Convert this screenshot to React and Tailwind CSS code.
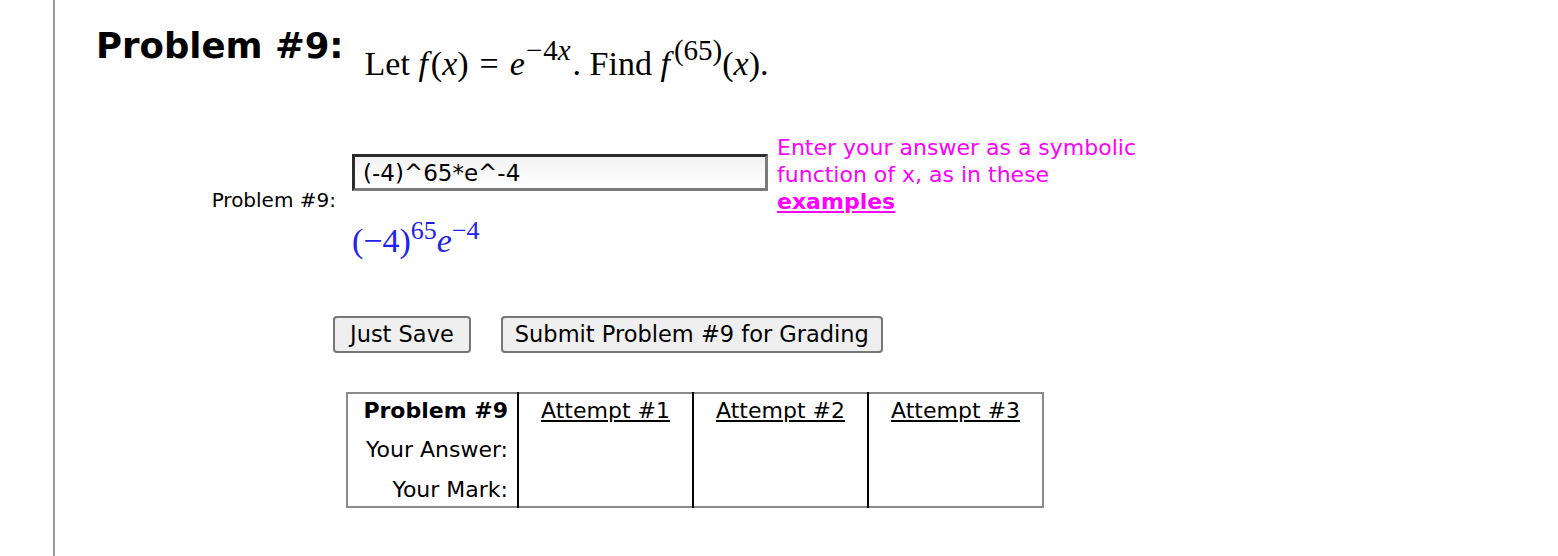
import React from 'react';

const sans = "font-['DejaVu_Sans','Verdana',sans-serif]";
const serif = "font-['Liberation_Serif','Times_New_Roman',serif]";

function Sup({ children, size = 'text-[29px]', raise = '-top-[15px]', extra = '' }) {
  return <span className={`relative ${raise} ${size} ${extra} leading-none`}>{children}</span>;
}

function Question() {
  return (
    <span className={`${serif} text-[34px] leading-[40px] text-black whitespace-nowrap`}>
      Let <i className="mr-[3px]">f</i>(<i>x</i>)<span className="mx-[11px]">=</span><i className="mr-[1px]">e</i>
      <Sup>
        <span className="mr-[1px]">−</span>4<i>x</i>
      </Sup>
      <span className="ml-[2px]">. Find </span>
      <i className="mr-[4px]">f</i>
      <Sup>(65)</Sup>(<i>x</i>).
    </span>
  );
}

function Preview() {
  return (
    <div className={`${serif} text-[34px] leading-[40px] text-[#2222ee] whitespace-nowrap`}>
      (−4)<Sup size="text-[26px]" raise="-top-[13px]">65</Sup>
      <i>e</i>
      <Sup size="text-[26px]" raise="-top-[13px]">−4</Sup>
    </div>
  );
}

function AttemptsTable() {
  const cols = ['Attempt #1', 'Attempt #2', 'Attempt #3'];
  return (
    <table className="w-[696px] table-fixed border-2 border-[#8a8a8a] border-collapse text-[22px] text-black">
      <colgroup>
        <col className="w-[171px]" />
        <col className="w-[175px]" />
        <col className="w-[175px]" />
        <col className="w-[175px]" />
      </colgroup>
      <tbody>
        <tr className="h-[37px]">
          <th className="text-right pr-[9px] pb-[3px] font-bold border-r-2 border-black">Problem #9</th>
          {cols.map((c, i) => (
            <td key={c} className={`text-center underline pb-[3px] ${i < 2 ? 'border-r-2 border-black' : ''}`}>
              {c}
            </td>
          ))}
        </tr>
        <tr className="h-[39px]">
          <td className="text-right pr-[9px] border-r-2 border-black">Your Answer:</td>
          <td className="border-r-2 border-black"></td>
          <td className="border-r-2 border-black"></td>
          <td></td>
        </tr>
        <tr className="h-[36px]">
          <td className="text-right pr-[9px] pt-[4px] border-r-2 border-black">Your Mark:</td>
          <td className="border-r-2 border-black"></td>
          <td className="border-r-2 border-black"></td>
          <td></td>
        </tr>
      </tbody>
    </table>
  );
}

export default function App() {
  return (
    <div className={`${sans} flex min-h-[556px] bg-white text-black`}>
      <div className="w-[55px] shrink-0 border-r-2 border-[#9a9a9a]" />
      <div className="flex-1 pl-[41px]">
        {/* heading */}
        <div className="flex items-start pt-[26px] h-[84px]">
          <h2 className="text-[35.5px] leading-[40px] font-bold whitespace-nowrap">Problem #9:</h2>
          <div className="ml-[21px] mt-[18px]">
            <Question />
          </div>
        </div>

        {/* answer row */}
        <div className="flex items-start mt-[50px] h-[136px]">
          <div className="w-[240px] text-right text-[20px] leading-[27px] mt-[53px]">Problem #9:</div>
          <div className="ml-[16px] flex items-start">
            <div className="flex flex-col mt-[20px]">
              <input
                type="text"
                defaultValue="(-4)^65*e^-4"
                className="w-[416px] h-[37px] px-[8px] text-[23px] text-black border-[3px] border-t-[#2b2b2b] border-l-[#2b2b2b] border-b-[#7a7a7a] border-r-[#7a7a7a] bg-gradient-to-b from-[#f2f2f2] to-white outline-none"
              />
              <div className="mt-[30px]">
                <Preview />
              </div>
            </div>
            <div className="ml-[9px] text-[22px] leading-[27px] text-[#ff00ff] w-[390px]">
              Enter your answer as a symbolic
              <br />
              function of x, as in these
              <br />
              <a href="#" className="font-bold underline text-[#ff00ff]">examples</a>
            </div>
          </div>
        </div>

        {/* buttons */}
        <div className="flex items-center gap-[30px] ml-[237px] mt-[46px]">
          <button className="h-[37px] px-[15px] text-[22.5px] bg-[#efefef] border-2 border-[#767676] rounded-[4px]">
            Just Save
          </button>
          <button className="h-[37px] px-[12px] text-[22.5px] bg-[#efefef] border-2 border-[#767676] rounded-[4px]">
            Submit Problem #9 for Grading
          </button>
        </div>

        {/* attempts */}
        <div className="ml-[250px] mt-[39px]">
          <AttemptsTable />
        </div>
      </div>
    </div>
  );
}
